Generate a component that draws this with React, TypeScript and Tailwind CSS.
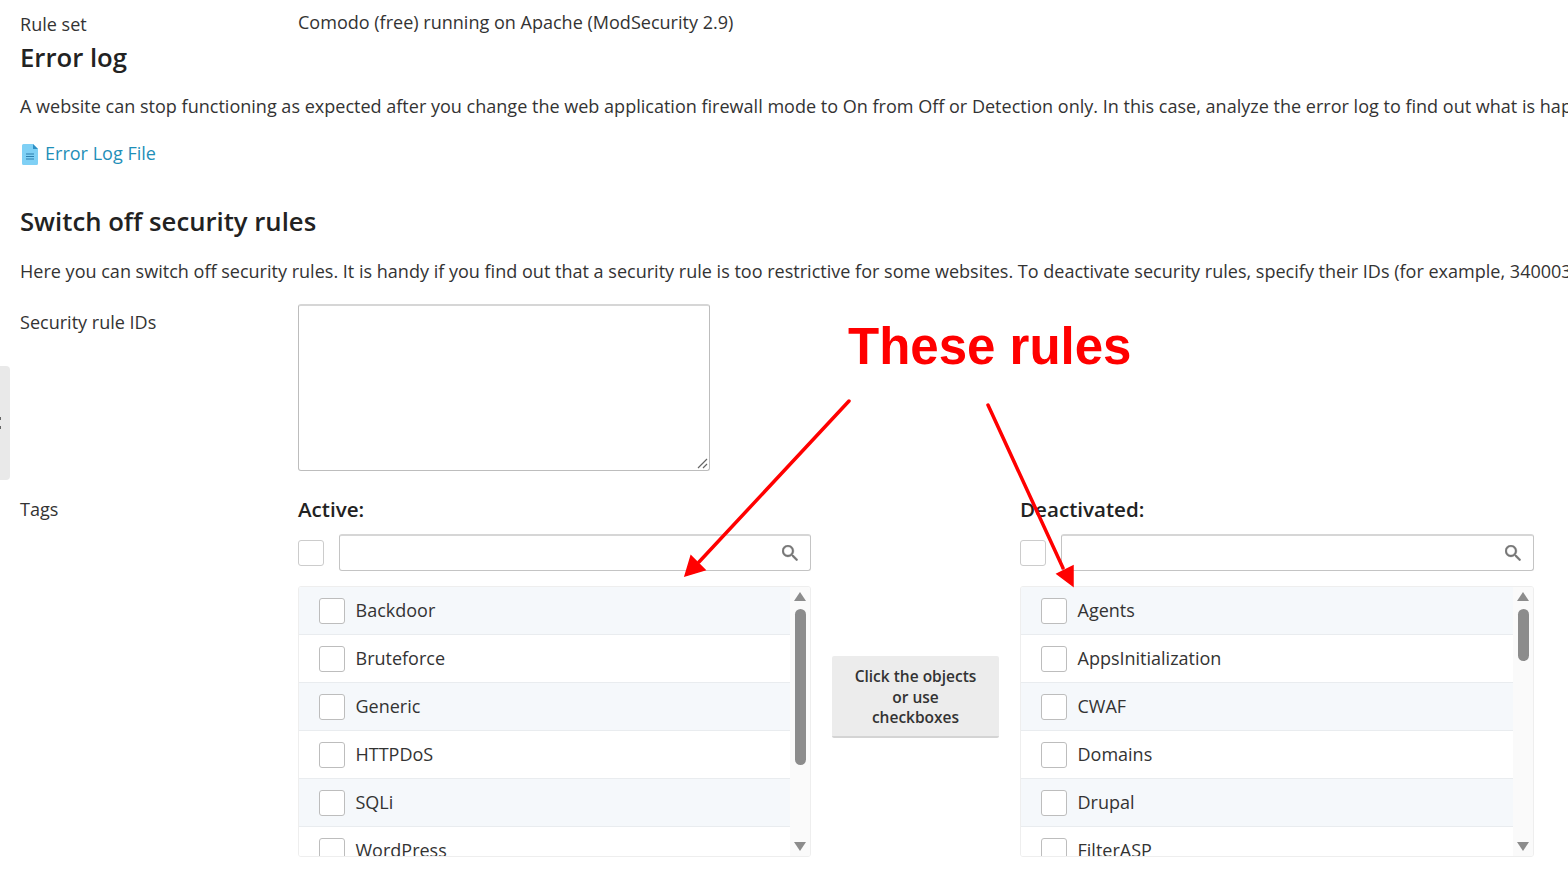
const active = ["Backdoor", "Bruteforce", "Generic", "HTTPDoS", "SQLi", "WordPress"];
const deactivated = ["Agents", "AppsInitialization", "CWAF", "Domains", "Drupal", "FilterASP"];

type TagListProps = {
  title: string;
  items: string[];
  thumbHeight: string;
};

const SearchIcon = () => (
  <svg className="h-[16px] w-[16px]" viewBox="3 3 17.500 17.500" fill="#757575" stroke="#757575" strokeWidth="0.4">
    <path d="M15.500 14h-.79l-.28-.27A6.471 6.471 0 0 0 16 9.500 6.500 6.500 0 1 0 9.500 16c1.610 0 3.090-.59 4.230-1.570l.27.28v.79l5 4.990L20.490 19l-4.990-5zm-6 0C7.010 14 5 11.990 5 9.500S7.010 5 9.500 5 14 7.010 14 9.500 11.990 14 9.500 14z" />
  </svg>
);

const TagList: React.FC<TagListProps> = ({ title, items, thumbHeight }) => {
  return (
    <div className="flex flex-col">
      <div className="h-[31px] text-[20.6px] leading-[28px] font-semibold text-[#222]">{title}</div>
      <div className="mt-[8px] flex h-[37px] items-center gap-[15px]">
        <div className="h-[26px] w-[26px] shrink-0 rounded-[3px] border border-[#ccc] bg-white" />
        <div className="flex h-[37px] flex-1 items-center justify-end rounded-[3px] border border-[#c4c4c4] border-t-2 border-t-[#d6d6d6] pr-[12px]">
          <SearchIcon />
        </div>
      </div>
      <div className="mt-[15px] flex h-[271px] overflow-hidden rounded-[3px] border border-[#eeeeee]">
        <div className="flex-1 overflow-hidden">
          {items.map((item, i) => (
            <div
              key={item}
              className={`flex h-[48px] items-center gap-[10.5px] border-b border-[#e9ecef] pl-[20px] text-[18px] text-[#333] ${
                i % 2 === 0 ? "bg-[#f5f8fb]" : "bg-white"
              }`}
            >
              <div className="h-[26px] w-[26px] shrink-0 rounded-[3px] border border-[#bdbdbd] bg-white" />
              <span>{item}</span>
            </div>
          ))}
        </div>
        <div className="flex w-[20px] shrink-0 flex-col items-center bg-[#fafafa] pt-[5px]">
          <div className="h-0 w-0 border-x-[6.5px] border-b-[9px] border-x-transparent border-b-[#8c8c8c]" />
          <div className={`mt-[8px] w-[11px] rounded-full bg-[#8c8c8c] ${thumbHeight}`} />
          <div className="mt-auto mb-[5px] h-0 w-0 border-x-[6.5px] border-t-[9px] border-x-transparent border-t-[#8c8c8c]" />
        </div>
      </div>
    </div>
  );
};

export default function App() {
  return (
    <div className="relative h-[870px] w-[1568px] overflow-hidden bg-white font-['Open_Sans',sans-serif] text-[18.04px] text-[#333]">
      <div className="pl-[20px] pt-[7px]">
        <div className="flex h-[31px]">
          <div className="w-[278px] pt-[2px] leading-[30px]">Rule set</div>
          <div className="leading-[30px]">Comodo (free) running on Apache (ModSecurity 2.9)</div>
        </div>
        <h2 className="mt-[3px] text-[25.7px] leading-[34px] font-semibold text-[#222]">Error log</h2>
        <p className="mt-[16px] whitespace-nowrap leading-[30px]">
          A website can stop functioning as expected after you change the web application firewall mode to On from Off or Detection only. In this case, analyze the error log to find out what is happening.
        </p>
        <div className="mt-[18px] flex h-[30px] items-center text-[#1f8fb8]">
          <svg className="ml-[2px] mr-[7px] h-[21px] w-[16px]" viewBox="0 0 16 21">
            <path d="M1.500 0H11l5 5v14.500a1.500 1.500 0 0 1-1.500 1.500h-13A1.500 1.500 0 0 1 0 19.500V1.500A1.500 1.500 0 0 1 1.500 0Z" fill="#7fd0f5" />
            <path d="M11 0l5 5h-5Z" fill="#2f8fc4" />
            <path d="M4 10h8M4 12.500h8M4 15h8" stroke="#2f7fae" strokeWidth="1" />
          </svg>
          <span>Error Log File</span>
        </div>
        <h2 className="mt-[36px] text-[25.7px] leading-[34px] font-semibold text-[#222]">Switch off security rules</h2>
        <p className="mt-[17px] whitespace-nowrap leading-[30px]">
          Here you can switch off security rules. It is handy if you find out that a security rule is too restrictive for some websites. To deactivate security rules, specify their IDs (for example, 340003, 340004).
        </p>
        <div className="mt-[18px] flex">
          <div className="w-[278px] pt-[3px] leading-[30px]">Security rule IDs</div>
          <div className="relative h-[167px] w-[412px] rounded-[3px] border border-[#bdbdbd] border-t-2 border-t-[#d6d6d6]">
            <svg className="absolute bottom-[1px] right-[1px] h-[11px] w-[11px]" viewBox="0 0 11 11">
              <path d="M1 10 10 1M6 10l4-4" stroke="#666" strokeWidth="1.200" fill="none" />
            </svg>
          </div>
        </div>
        <div className="mt-[24px] flex">
          <div className="w-[278px] leading-[28px]">Tags</div>
          <div className="w-[513px]">
            <TagList title="Active:" items={active} thumbHeight="h-[156px]" />
          </div>
          <div className="flex w-[209px] flex-col items-center pt-[161px]">
            <div className="flex h-[82px] w-[167px] items-center justify-center rounded-[2px] border-b-2 border-[#d4d4d4] bg-[#ececec] pt-[2px] text-center text-[15.5px] leading-[20.5px] font-semibold text-[#333]">
              <span>
                Click the objects
                <br />
                or use
                <br />
                checkboxes
              </span>
            </div>
          </div>
          <div className="w-[514px]">
            <TagList title="Deactivated:" items={deactivated} thumbHeight="h-[52px]" />
          </div>
        </div>
      </div>

      {/* side handle */}
      <div className="absolute left-0 top-[366px] h-[114px] w-[10px] rounded-r-[4px] bg-[#e9e9e9]">
        <div className="absolute left-0 top-[51px] h-[3px] w-[1px] bg-[#666]" />
        <div className="absolute left-0 top-[60px] h-[3px] w-[1px] bg-[#666]" />
      </div>

      {/* annotation */}
      <div className="absolute left-[848px] top-[315px] font-['Liberation_Sans',sans-serif] text-[51px] leading-[64px] font-bold text-[#ff0000]">
        These rules
      </div>
      <svg className="absolute left-0 top-0 h-[870px] w-[1568px]" viewBox="0 0 1568 870">
        <path d="M849 401 699 562" stroke="#f00" strokeWidth="3.500" strokeLinecap="round" fill="none" />
        <path d="M685 576 691 556 705 570Z" fill="#f00" stroke="#f00" strokeWidth="1.500" />
        <path d="M988 405 1063 568" stroke="#f00" strokeWidth="3.500" strokeLinecap="round" fill="none" />
        <path d="M1073 586 1057 574 1073 566Z" fill="#f00" stroke="#f00" strokeWidth="1.500" />
      </svg>
    </div>
  );
}
